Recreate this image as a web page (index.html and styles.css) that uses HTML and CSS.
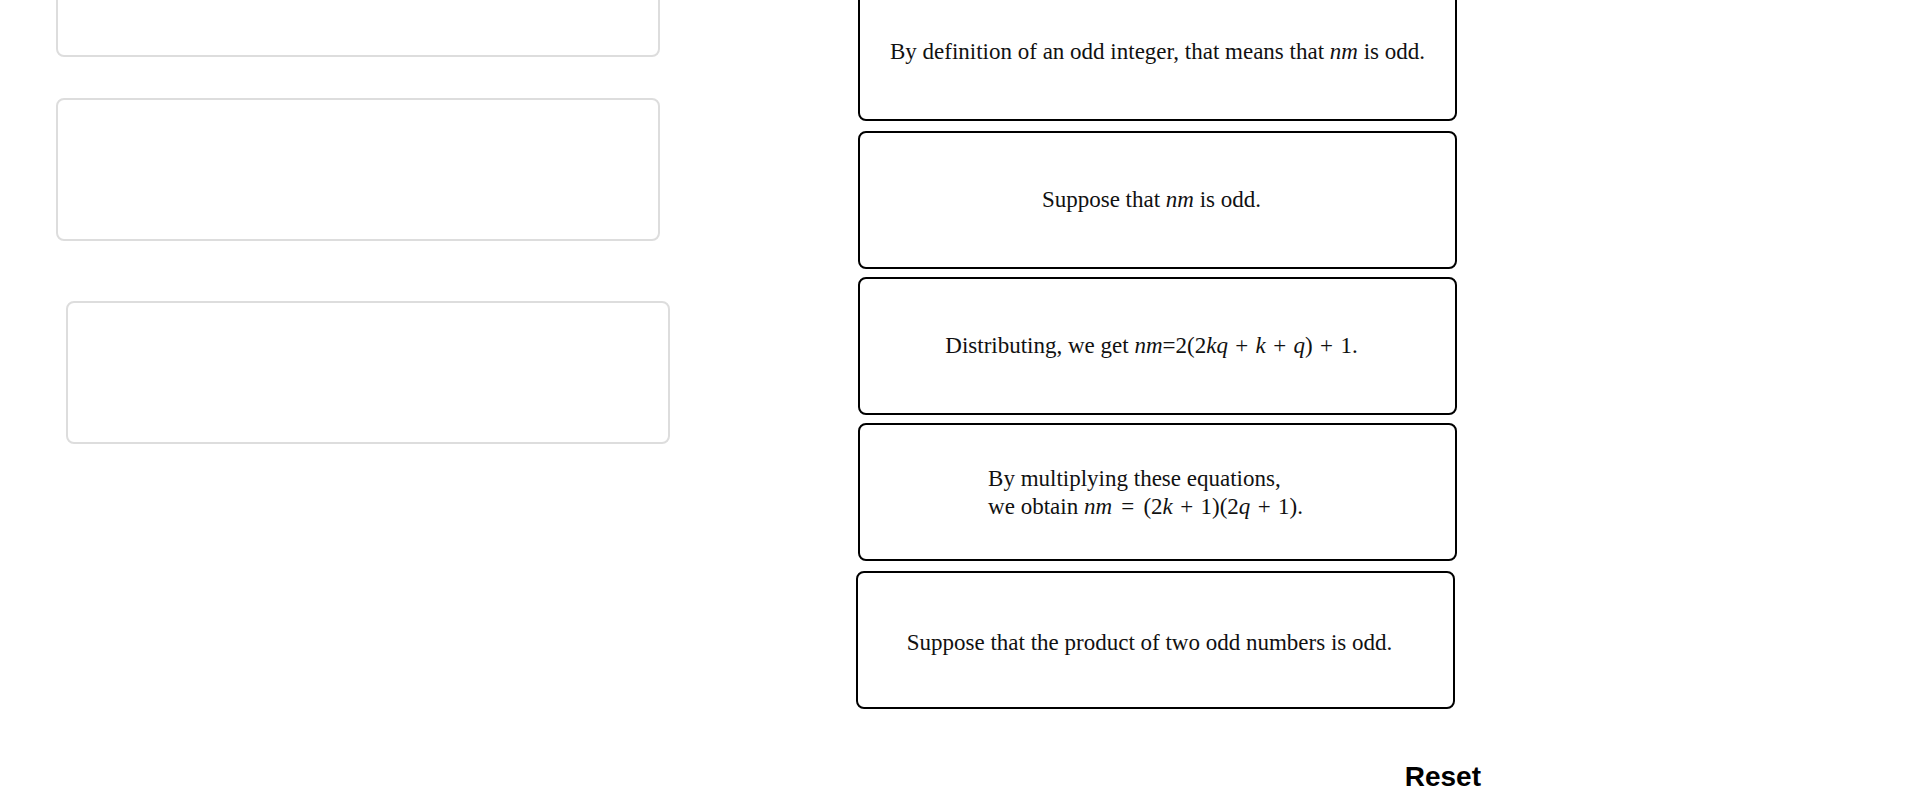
FILE: index.html
```html
<!DOCTYPE html>
<html lang="en">
<head>
<meta charset="utf-8">
<title>Proof ordering</title>
<link rel="stylesheet" href="styles.css">
</head>
<body>
<main class="board">
  <section class="slots">
    <div class="slot slot-first"></div>
    <div class="slot slot-second"></div>
    <div class="slot slot-third"></div>
  </section>
  <section class="pool">
    <div class="card card-a"><p class="stmt stmt-centered">By definition of an odd integer, that means that <i>nm</i> is odd.</p></div>
    <div class="card"><p class="stmt">Suppose that <i>nm</i> is odd.</p></div>
    <div class="card"><p class="stmt">Distributing, we get <i>nm</i>=2(2<i>kq</i><span class="op">+</span><i>k</i><span class="op">+</span><i>q</i>)<span class="op">+</span>1.</p></div>
    <div class="card card-d"><p class="stmt stmt-multi">By multiplying these equations,<br>we obtain <i>nm</i><span class="rel">=</span>(2<i>k</i><span class="op">+</span>1)(2<i>q</i><span class="op">+</span>1).</p></div>
    <div class="card card-e"><p class="stmt">Suppose that the product of two odd numbers is odd.</p></div>
    <div class="actions"><button class="reset" type="button">Reset</button></div>
  </section>
</main>
</body>
</html>
```
FILE: styles.css
```css
html, body {
  margin: 0;
  padding: 0;
  background: #ffffff;
}

body {
  font-family: "Liberation Serif", "Times New Roman", serif;
  color: #111111;
  overflow: hidden;
}

.board {
  display: flex;
  align-items: flex-start;
  padding-left: 56px;
}

.slots {
  display: flex;
  flex-direction: column;
  align-items: flex-start;
  width: 614px;
  margin-top: -86px;
}

.slot {
  box-sizing: border-box;
  width: 604px;
  height: 143px;
  border: 2px solid #dddddd;
  border-radius: 8px;
  background: #ffffff;
}

.slot-second {
  margin-top: 41px;
}

.slot-third {
  margin-top: 60px;
  margin-left: 10px;
}

.pool {
  display: flex;
  flex-direction: column;
  width: 623px;
  margin-left: 188px;
  margin-top: -17px;
}

.card {
  box-sizing: border-box;
  width: 599px;
  height: 138px;
  border: 2px solid #000000;
  border-radius: 8px;
  background: #ffffff;
  display: flex;
  align-items: center;
  justify-content: center;
  margin-bottom: 8px;
}

.card-a,
.card-d {
  margin-bottom: 10px;
}

.card-e {
  margin-left: -2px;
  padding-top: 5px;
}

.stmt {
  margin: 0;
  padding-right: 12px;
  font-size: 23px;
  line-height: 28px;
  text-align: center;
  white-space: nowrap;
}

.stmt-centered {
  padding-right: 0;
}

.stmt i {
  font-style: italic;
}

.op {
  margin: 0 0.32em;
}

.rel {
  margin: 0 0.4em;
}

.stmt-multi {
  text-align: left;
  line-height: 28px;
  padding-top: 2px;
  padding-right: 24px;
}

.actions {
  display: flex;
  justify-content: flex-end;
  margin-top: 44px;
}

.reset {
  font-family: "Liberation Sans", Arial, Helvetica, sans-serif;
  font-weight: bold;
  font-size: 28px;
  line-height: 32px;
  color: #000000;
  background: none;
  border: none;
  padding: 0;
  cursor: pointer;
}
```
